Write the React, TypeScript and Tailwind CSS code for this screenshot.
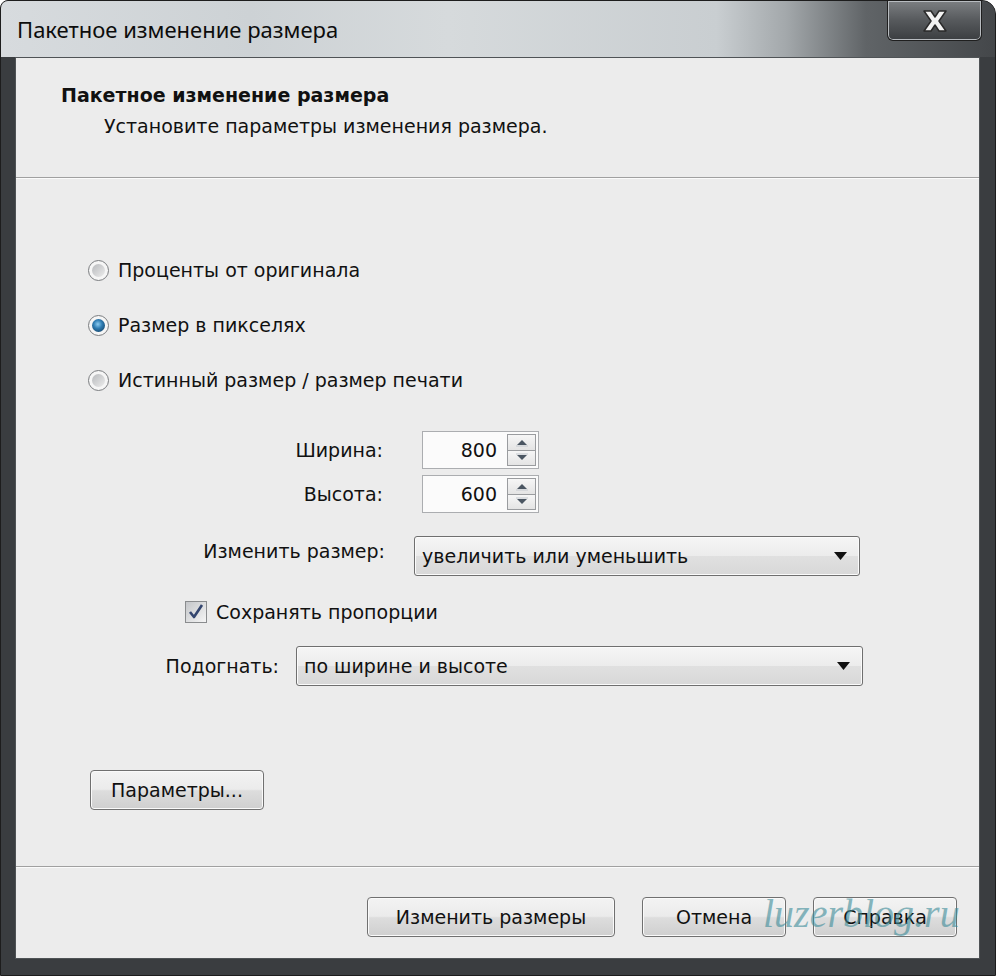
import React from "react";

const ui = "font-['DejaVu_Sans',sans-serif] text-[19px] text-[#111]";

const Radio = ({ checked, label }: { checked?: boolean; label: string }) => (
  <div className="flex h-[40px] items-center pl-[72px]">
    <span className="flex h-[21px] w-[21px] items-center justify-center rounded-full border border-[#7b7d80] bg-[#f6f6f6]">
      {checked ? (
        <span className="h-[13px] w-[13px] rounded-full bg-[radial-gradient(circle_at_45%_40%,#8ccbf0_0%,#2f7db3_40%,#0c3050_100%)]" />
      ) : (
        <span className="h-[13px] w-[13px] rounded-full bg-[linear-gradient(135deg,#b8babd,#ececec)]" />
      )}
    </span>
    <span className="ml-[9px]">{label}</span>
  </div>
);

const Arrow = ({ up }: { up?: boolean }) => (
  <svg width="14" height="9" viewBox="0 0 14 9">
    {up ? (
      <>
        <path d="M2 7 L7 2 L12 7 Z" fill="#4b5662" />
        <path d="M1 8 H13" stroke="#c3c8ce" strokeWidth="1" />
      </>
    ) : (
      <>
        <path d="M1 1 H13" stroke="#c3c8ce" strokeWidth="1" />
        <path d="M2 2 L7 7 L12 2 Z" fill="#4b5662" />
      </>
    )}
  </svg>
);

const Spin = ({ label, value }: { label: string; value: string }) => (
  <div className="flex h-[38px] items-center">
    <div className="w-[367px] text-right">{label}</div>
    <div className="ml-[39px] flex h-[38px] w-[117px] border border-[#abadb0] bg-[#fbfbfb]">
      <div className="flex flex-1 items-center justify-end pr-[10px]">{value}</div>
      <div className="my-[2px] mr-[2px] flex w-[29px] flex-col border border-[#9a9c9f]">
        <span className="flex flex-1 items-center justify-center border-b border-[#9a9c9f] bg-[linear-gradient(#f6f6f6,#e4e4e4)]">
          <Arrow up />
        </span>
        <span className="flex flex-1 items-center justify-center bg-[linear-gradient(#f6f6f6,#e4e4e4)]">
          <Arrow />
        </span>
      </div>
    </div>
  </div>
);

const Select = ({ value, className }: { value: string; className: string }) => (
  <div
    className={
      "flex h-[40px] items-center justify-between rounded-[3px] border border-[#6f6f6f] bg-[linear-gradient(#f5f5f5,#ececec_50%,#e0e0e0_50%,#d8d8d8)] pl-[7px] pr-[12px] shadow-[inset_0_0_0_1px_#fbfbfb] " +
      className
    }
  >
    <span>{value}</span>
    <svg width="13" height="8" viewBox="0 0 13 8">
      <path d="M0 0 H13 L6.5 8 Z" fill="#111" />
    </svg>
  </div>
);

const Btn = ({ label, className }: { label: string; className: string }) => (
  <div
    className={
      "flex h-[40px] items-center justify-center rounded-[4px] border border-[#707070] bg-[linear-gradient(#f3f3f3,#ebebeb_48%,#dddddd_52%,#cfcfcf)] shadow-[inset_0_0_0_1px_#fafafa] " +
      className
    }
  >
    {label}
  </div>
);

export default function App() {
  return (
    <div className="relative h-[976px] w-[996px] overflow-hidden rounded-tl-[8px] rounded-tr-[14px] border border-[#1d1d1d] bg-[#3a3d40]">
      {/* glass title bar */}
      <div className="flex h-[56px] items-center bg-[linear-gradient(90deg,#d7dbde_0%,#cdd2d5_25%,#d6dadc_45%,#c9ced1_72%,#a3a8ab_79%,#606467_87%,#44474a_100%)] pl-[16px]">
        <span className="font-['Noto_Sans',sans-serif] text-[22px] text-[#0c0c0c]">Пакетное изменение размера</span>
      </div>

      {/* close button */}
      <div className="absolute right-[13px] top-0 flex h-[40px] w-[95px] items-center justify-center rounded-b-[6px] border border-t-0 border-[#1f1f1f] bg-[linear-gradient(#7c7f82,#56595c_50%,#3b3e41)] shadow-[inset_0_0_0_1px_#b8bcc0]">
        <svg width="30" height="24" viewBox="0 0 30 24">
          <path
            d="M4 2 H11 L15 8 L19 2 H26 L19 12 L26 22 H19 L15 16 L11 22 H4 L11 12 Z"
            fill="#f2f2f2"
            stroke="#2a2a2a"
            strokeWidth="1.5"
            strokeLinejoin="round"
          />
        </svg>
      </div>

      <div className="flex h-[902px]">
        <div className="w-[14px]" />
        <div className={"flex w-[965px] flex-col border border-[#4f5356] bg-[#ececec] " + ui}>
          {/* header */}
          <div className="h-[119px] pl-[45px] pt-[25px]">
            <div className="font-bold leading-[24px]">Пакетное изменение размера</div>
            <div className="mt-[7px] pl-[43px] leading-[24px]">Установите параметры изменения размера.</div>
          </div>
          <div className="h-[1px] bg-[#a0a0a0]" />
          <div className="h-[1px] bg-[#fbfbfb]" />

          {/* body */}
          <div className="flex h-[687px] flex-col pt-[71px]">
            <div className="flex flex-col gap-[15px]">
              <Radio label="Проценты от оригинала" />
              <Radio checked label="Размер в пикселях" />
              <Radio label="Истинный размер / размер печати" />
            </div>

            <div className="mt-[31px] flex flex-col gap-[6px]">
              <Spin label="Ширина:" value="800" />
              <Spin label="Высота:" value="600" />
            </div>

            <div className="mt-[23px] flex items-center">
              <div className="mb-[10px] w-[369px] text-right">Изменить размер:</div>
              <Select value="увеличить или уменьшить" className="ml-[29px] w-[446px]" />
            </div>

            <div className="mt-[25px] flex h-[22px] items-center pl-[169px]">
              <span className="flex h-[22px] w-[22px] items-center justify-center border border-[#8a8c8e] bg-[linear-gradient(135deg,#c4c6c9,#f5f5f5)]">
                <svg width="16" height="16" viewBox="0 0 16 16">
                  <path d="M2 8 L6 13 L14 1" fill="none" stroke="#34466f" strokeWidth="2.6" strokeLinejoin="round" />
                </svg>
              </span>
              <span className="ml-[9px]">Сохранять пропорции</span>
            </div>

            <div className="mt-[23px] flex items-center">
              <div className="w-[263px] text-right">Подогнать:</div>
              <Select value="по ширине и высоте" className="ml-[17px] w-[567px]" />
            </div>

            <div className="mt-[84px] pl-[74px]">
              <Btn label="Параметры..." className="w-[174px]" />
            </div>
          </div>

          <div className="h-[1px] bg-[#a0a0a0]" />
          <div className="h-[1px] bg-[#fbfbfb]" />

          {/* footer */}
          <div className="flex flex-1 justify-end gap-[27px] pr-[22px] pt-[29px]">
            <Btn label="Изменить размеры" className="w-[248px]" />
            <Btn label="Отмена" className="w-[144px]" />
            <Btn label="Справка" className="w-[144px]" />
          </div>
        </div>
        <div className="flex-1" />
      </div>

      {/* watermark over the buttons */}
      <div className="pointer-events-none absolute left-[762px] top-[893px] font-['Liberation_Serif',serif] text-[40px] italic leading-none text-[#3d8c99] opacity-60">
        luzerblog.ru
      </div>
    </div>
  );
}
